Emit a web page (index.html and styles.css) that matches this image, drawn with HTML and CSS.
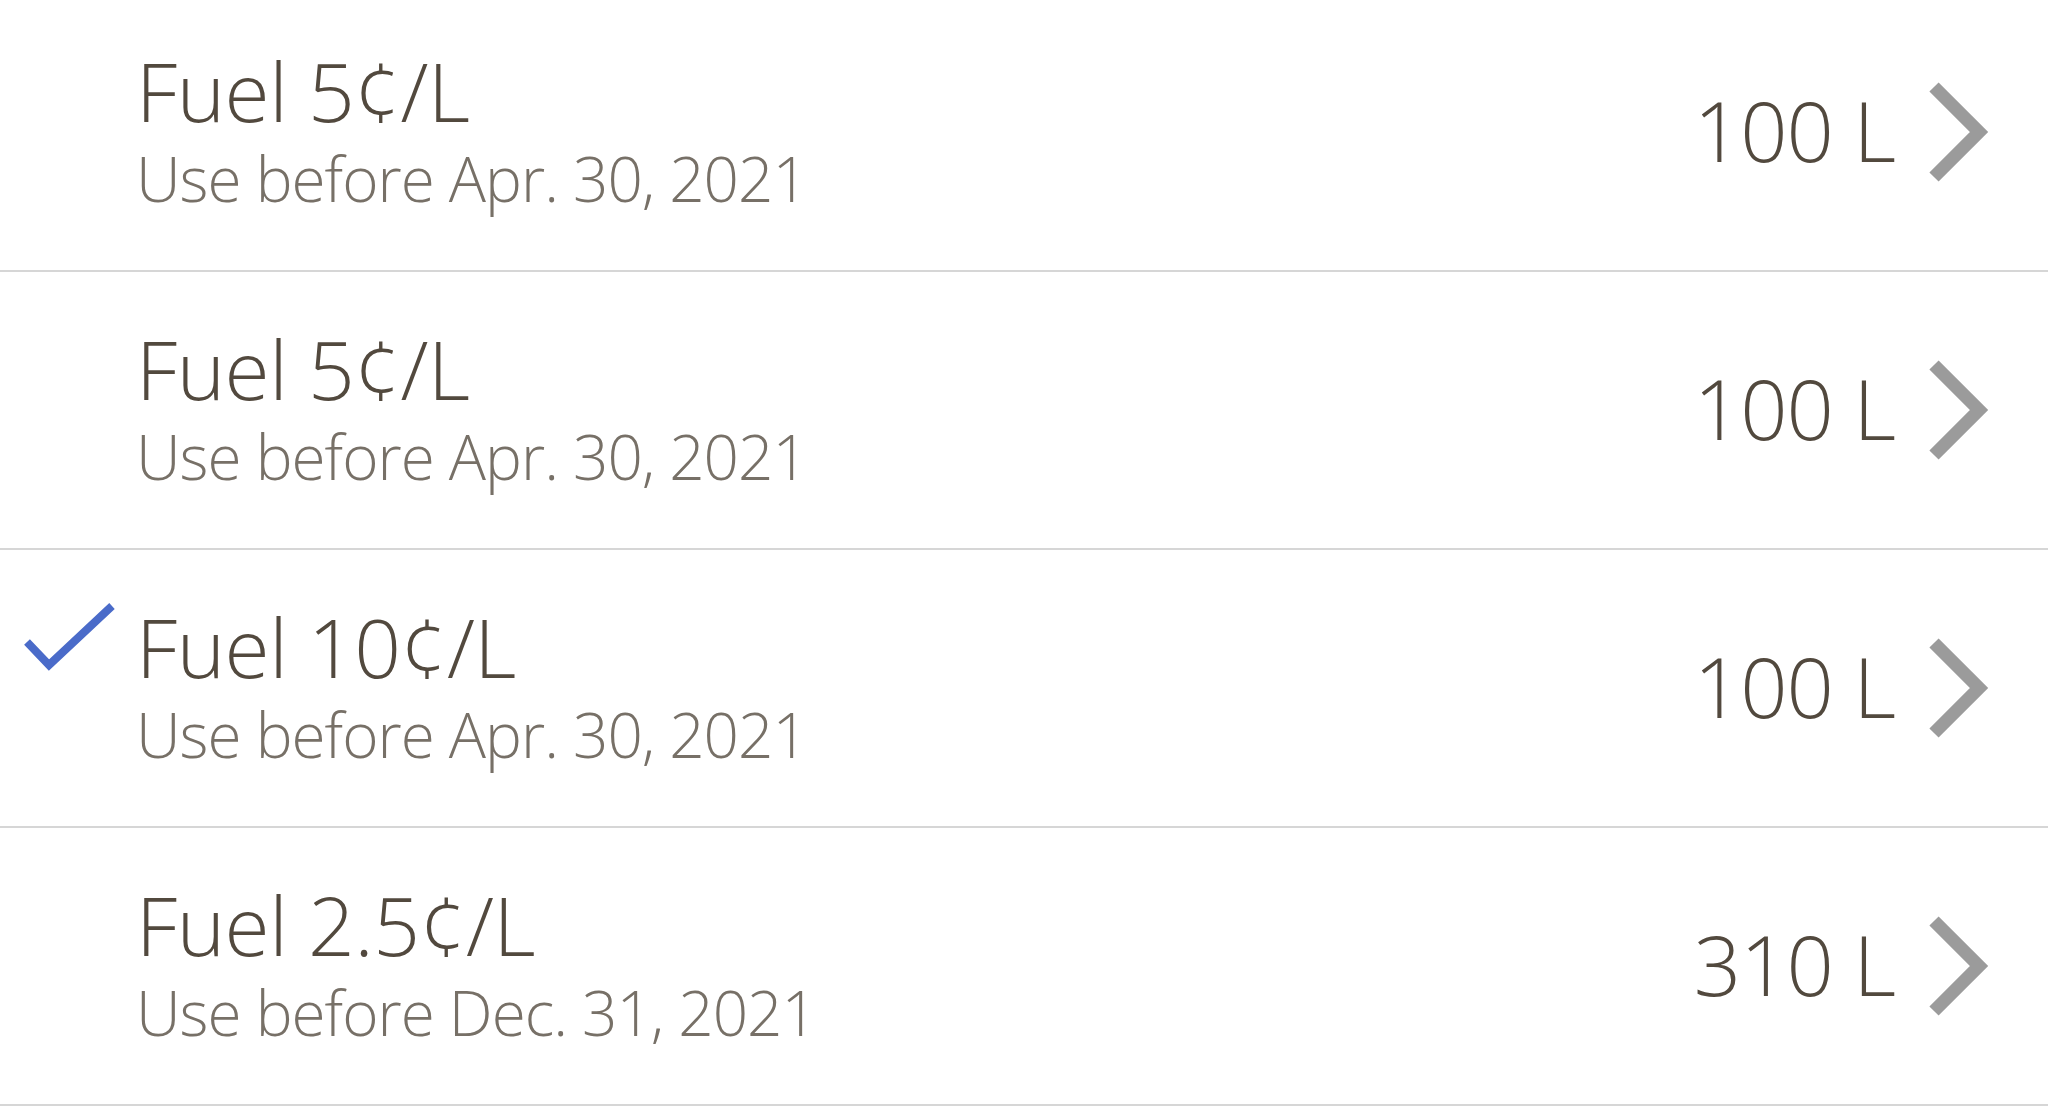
FILE: index.html
```html
<!DOCTYPE html>
<html lang="en">
<head>
<meta charset="utf-8">
<title>Fuel offers</title>
<link rel="stylesheet" href="styles.css">
</head>
<body>
<ul class="list">
  <li class="row">
    <div class="check-slot"></div>
    <div class="info">
      <div class="title">Fuel 5¢/L</div>
      <div class="sub">Use before Apr. 30, 2021</div>
    </div>
    <div class="amount">100 L</div>
    <svg class="chev" width="72" height="110" viewBox="0 0 72 110"><polyline points="9,10 54,55 9,100" fill="none" stroke="#9b9b9b" stroke-width="13"/></svg>
  </li>
  <li class="row">
    <div class="check-slot"></div>
    <div class="info">
      <div class="title">Fuel 5¢/L</div>
      <div class="sub">Use before Apr. 30, 2021</div>
    </div>
    <div class="amount">100 L</div>
    <svg class="chev" width="72" height="110" viewBox="0 0 72 110"><polyline points="9,10 54,55 9,100" fill="none" stroke="#9b9b9b" stroke-width="13"/></svg>
  </li>
  <li class="row">
    <div class="check-slot">
      <svg class="check" width="100" height="80" viewBox="0 0 100 80"><polyline points="12,40 34,63 97,4" fill="none" stroke="#4a6bc9" stroke-width="8"/></svg>
    </div>
    <div class="info">
      <div class="title">Fuel 10¢/L</div>
      <div class="sub">Use before Apr. 30, 2021</div>
    </div>
    <div class="amount">100 L</div>
    <svg class="chev" width="72" height="110" viewBox="0 0 72 110"><polyline points="9,10 54,55 9,100" fill="none" stroke="#9b9b9b" stroke-width="13"/></svg>
  </li>
  <li class="row">
    <div class="check-slot"></div>
    <div class="info">
      <div class="title">Fuel 2.5¢/L</div>
      <div class="sub">Use before Dec. 31, 2021</div>
    </div>
    <div class="amount">310 L</div>
    <svg class="chev" width="72" height="110" viewBox="0 0 72 110"><polyline points="9,10 54,55 9,100" fill="none" stroke="#9b9b9b" stroke-width="13"/></svg>
  </li>
</ul>
</body>
</html>
```

FILE: styles.css
```css
html, body {
  margin: 0;
  padding: 0;
  background: #ffffff;
}

body {
  font-family: "Open Sans", "Noto Sans", "Liberation Sans", sans-serif;
  color: #554c41;
  overflow: hidden;
}

.list {
  list-style: none;
  margin: -6px 0 0 0;
  padding: 0;
}

.row {
  display: flex;
  align-items: center;
  height: 278px;
  box-sizing: border-box;
  border-bottom: 2px solid #d6d6d6;
  padding-right: 51px;
}

.check-slot {
  width: 136px;
  flex: none;
  align-self: flex-start;
  padding-top: 52px;
  box-sizing: border-box;
  height: 100%;
}

.check {
  display: block;
  margin-left: 15px;
}

.info {
  flex: 1;
  display: flex;
  flex-direction: column;
  padding-top: 4px;
}

.title {
  font-size: 82px;
  line-height: 88px;
  font-weight: 360;
  letter-spacing: -0.5px;
  color: #52493e;
}

.sub {
  font-size: 62px;
  line-height: 88px;
  font-weight: 300;
  letter-spacing: -1px;
  color: #777067;
}

.amount {
  font-size: 83px;
  line-height: 90px;
  font-weight: 360;
  letter-spacing: -1px;
  color: #52493e;
  margin-right: 30px;
  padding-bottom: 4px;
}

.chev {
  display: block;
  flex: none;
}
```
